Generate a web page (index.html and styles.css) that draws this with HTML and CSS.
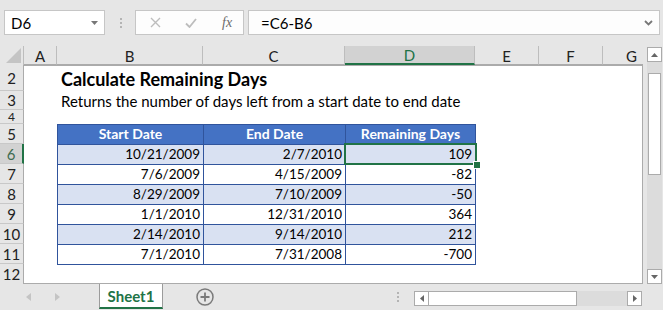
FILE: index.html
```
<!DOCTYPE html>
<html>
<head>
    <title>Calculate Remaining Days</title>
    <meta charset="UTF-8">
    <link rel="stylesheet" href="styles.css">
</head>
<body>
<div class="app">
    <div class="toolbar">
        <div class="namebox">
            <span>D6</span>
            <svg class="caret" width="7" height="4" viewBox="0 0 7 4"><path d="M0 0h7L3.5 4z" fill="#777"/></svg>
        </div>
        <div class="vdots"><i></i><i></i><i></i></div>
        <div class="fxbox">
            <svg class="ico" width="11" height="11" viewBox="0 0 11 11"><path d="M1 1l9 9M10 1l-9 9" stroke="#bdbdbd" stroke-width="1.4" fill="none"/></svg>
            <svg class="ico" width="12" height="10" viewBox="0 0 12 10"><path d="M1 5.5l3.5 3.5L11 1" stroke="#bdbdbd" stroke-width="1.8" fill="none"/></svg>
            <span class="fx">fx</span>
        </div>
        <div class="formula">
            <span>=C6-B6</span>
            <svg class="chev" width="9" height="6" viewBox="0 0 9 6"><path d="M1 1l3.5 3.5L8 1" stroke="#777" stroke-width="1.8" fill="none"/></svg>
        </div>
    </div>

    <div class="main">
        <div class="grid">
            <div class="canvas"></div>

            <div class="corner"><svg width="15" height="15" viewBox="0 0 15 15"><path d="M15 0V15H0z" fill="#c4c4c4"/></svg></div>
            <div class="colhead">A</div>
            <div class="colhead">B</div>
            <div class="colhead">C</div>
            <div class="colhead active">D</div>
            <div class="colhead">E</div>
            <div class="colhead">F</div>
            <div class="colhead last">G</div>

            <div class="rowhead r2">2</div>
            <div class="rowhead r3">3</div>
            <div class="rowhead r4">4</div>
            <div class="rowhead r5">5</div>
            <div class="rowhead r6 active">6</div>
            <div class="rowhead r7">7</div>
            <div class="rowhead r8">8</div>
            <div class="rowhead r9">9</div>
            <div class="rowhead r10">10</div>
            <div class="rowhead r11">11</div>
            <div class="rowhead r12">12</div>

            <div class="title">Calculate Remaining Days</div>
            <div class="subtitle">Returns the number of days left from a start date to end date</div>

            <div class="table">
                <div class="th">Start Date</div><div class="th">End Date</div><div class="th">Remaining Days</div>
                <div class="td band">10/21/2009</div><div class="td band">2/7/2010</div><div class="td band">109</div>
                <div class="td">7/6/2009</div><div class="td">4/15/2009</div><div class="td">-82</div>
                <div class="td band">8/29/2009</div><div class="td band">7/10/2009</div><div class="td band">-50</div>
                <div class="td">1/1/2010</div><div class="td">12/31/2010</div><div class="td">364</div>
                <div class="td band">2/14/2010</div><div class="td band">9/14/2010</div><div class="td band">212</div>
                <div class="td">7/1/2010</div><div class="td">7/31/2008</div><div class="td">-700</div>
            </div>

            <div class="selcell"><div class="sel"></div><div class="handle"></div></div>
        </div>

        <div class="vscroll">
            <div class="sbtn"><svg width="7" height="4" viewBox="0 0 7 4"><path d="M3.5 0L7 4H0z" fill="#666"/></svg></div>
            <div class="vtrack"><div class="vthumb"></div></div>
            <div class="sbtn"><svg width="7" height="4" viewBox="0 0 7 4"><path d="M0 0h7L3.5 4z" fill="#666"/></svg></div>
        </div>
    </div>

    <div class="tabs">
        <div class="tabnav">
            <svg width="5" height="8" viewBox="0 0 5 8"><path d="M5 0V8L0 4z" fill="#c4c4c4"/></svg>
            <svg width="5" height="8" viewBox="0 0 5 8"><path d="M0 0V8L5 4z" fill="#c4c4c4"/></svg>
        </div>
        <div class="tab">Sheet1</div>
        <div class="addsheet">
            <svg width="18" height="18" viewBox="0 0 18 18"><circle cx="9" cy="9" r="8" stroke="#7a7a7a" stroke-width="1.5" fill="none"/><path d="M9 4.5v9M4.5 9h9" stroke="#7a7a7a" stroke-width="1.8"/></svg>
        </div>
        <div class="vdots hd"><i></i><i></i><i></i></div>
        <div class="hscroll">
            <div class="hbtn"><svg width="4" height="7" viewBox="0 0 4 7"><path d="M4 0V7L0 3.5z" fill="#666"/></svg></div>
            <div class="hthumb"></div>
            <div class="htrack"></div>
            <div class="hbtn"><svg width="4" height="7" viewBox="0 0 4 7"><path d="M0 0V7L4 3.5z" fill="#666"/></svg></div>
        </div>
    </div>
</div>
</body>
</html>
```

FILE: styles.css
```
* { box-sizing: border-box; }

body {
    margin: 0;
    background: #e6e6e6;
    font-family: Lato, "Liberation Sans", sans-serif;
    font-size: 15px;
    color: #000;
}

.app {
    width: 663px;
    height: 310px;
    overflow: hidden;
}

/* formula bar */

.toolbar {
    height: 46px;
    display: flex;
    align-items: flex-start;
    padding: 10px 0 0 4px;
}

.namebox {
    width: 101px;
    height: 25px;
    background: #fff;
    border: 1px solid #c6c6c6;
    display: flex;
    align-items: center;
    justify-content: space-between;
    padding: 0 6px 0 6px;
}

.vdots {
    display: flex;
    flex-direction: column;
    gap: 2px;
    margin: 8px 0 0 15px;
}
.vdots i {
    display: block;
    width: 2px;
    height: 2px;
    background: #b4b4b4;
}

.fxbox {
    width: 109px;
    height: 25px;
    margin-left: 13px;
    background: #fdfdfd;
    border: 1px solid #c6c6c6;
    display: flex;
    align-items: center;
    padding-left: 14px;
    gap: 24px;
}
.fx {
    font-family: "Liberation Serif", serif;
    font-style: italic;
    font-size: 14px;
    color: #6b6b6b;
    margin-left: 1px;
}

.formula {
    flex: 1;
    height: 25px;
    margin: 0 3px 0 4px;
    background: #fdfdfd;
    border: 1px solid #c6c6c6;
    display: flex;
    align-items: center;
    justify-content: space-between;
    padding: 0 6px 0 12px;
}

/* sheet */

.main {
    height: 238px;
    display: flex;
}

.grid {
    width: 643px;
    display: grid;
    grid-template-columns: 24px 33px 146px 142px 130px 64px 64px 40px;
    grid-template-rows: 19px 26px 19px 14px repeat(7, 20px) 20px;
}

.canvas {
    grid-column: 2 / -1;
    grid-row: 2 / -1;
    background: #fff;
    border-top: 1px solid #ababab;
    border-right: 1px solid #ababab;
    border-bottom: 1px solid #ababab;
}

.corner {
    grid-column: 1;
    grid-row: 1;
    display: flex;
    align-items: flex-end;
    justify-content: flex-end;
    padding: 0 2px 2px 0;
    border-right: 1px solid #bdbdbd;
}

.colhead {
    grid-row: 1;
    display: flex;
    align-items: center;
    justify-content: center;
    border-right: 1px solid #bdbdbd;
    border-bottom: 1px solid #ababab;
    color: #222;
    font-size: 15px;
    padding-top: 1px;
}
.colhead.last { justify-content: flex-end; padding-right: 6px; border-right: none; }
.colhead.active {
    background: #d2d2d2;
    color: #217346;
    border-bottom: 2px solid #217346;
}

.rowhead {
    grid-column: 1;
    display: flex;
    align-items: center;
    justify-content: center;
    overflow: hidden;
    border-right: 1px solid #ababab;
    border-bottom: 1px solid #c8c8c8;
    color: #222;
    font-size: 15px;
}
.rowhead.active {
    background: #d2d2d2;
    color: #3d6b50;
    border-right: 2px solid #217346;
}
.r2 { grid-row: 2; }
.r3 { grid-row: 3; }
.r4 { grid-row: 4; font-size: 12px; line-height: 12px; overflow: visible; }
.r5 { grid-row: 5; }
.r6 { grid-row: 6; }
.r7 { grid-row: 7; }
.r8 { grid-row: 8; }
.r9 { grid-row: 9; }
.r10 { grid-row: 10; }
.r11 { grid-row: 11; }
.r12 { grid-row: 12; border-bottom: none; }

.title {
    grid-column: 3 / -1;
    grid-row: 2;
    align-self: end;
    padding: 0 0 1px 4px;
    font-size: 18px;
    font-weight: bold;
}

.subtitle {
    grid-column: 3 / -1;
    grid-row: 3;
    align-self: end;
    padding-left: 4px;
    white-space: nowrap;
    line-height: 18px;
}

/* data table */

.table {
    grid-column: 3 / 6;
    grid-row: 5 / 12;
    width: 419px;
    display: grid;
    grid-template-columns: 147px 142px 130px;
    grid-template-rows: 21px repeat(6, 20px);
    align-self: start;
}

.th, .td {
    border-right: 1px solid #30549c;
    border-bottom: 1px solid #30549c;
    line-height: 18px;
    white-space: nowrap;
    font-size: 13.5px;
}
.th:first-child, .td:nth-child(3n+1) { border-left: 1px solid #30549c; }

.th {
    background: #4472c4;
    color: #fff;
    font-weight: bold;
    font-size: 14px;
    text-align: center;
    border-top: 1px solid #30549c;
}

.td {
    text-align: right;
    padding-right: 3px;
    line-height: 19px;
}
.td.band { background: #d9e1f2; }

.selcell {
    grid-column: 5;
    grid-row: 6;
    position: relative;
}
.sel {
    position: absolute;
    left: -1px;
    top: -1px;
    right: -2px;
    bottom: -1px;
    border: 2px solid #217346;
}
.handle {
    position: absolute;
    right: -5px;
    bottom: -4px;
    width: 6px;
    height: 6px;
    background: #217346;
    outline: 1px solid #fff;
}

/* scrollbars */

.vscroll {
    width: 20px;
    padding: 1px 1px 0 4px;
    display: flex;
    flex-direction: column;
}
.sbtn {
    height: 15px;
    background: #fff;
    border: 1px solid #ababab;
    display: flex;
    align-items: center;
    justify-content: center;
}
.vtrack {
    flex: 1;
    background: #dcdcdc;
    padding: 11px 1px 0 1px;
}
.vthumb {
    height: 102px;
    background: #fff;
    border: 1px solid #ababab;
}

/* sheet tabs */

.tabs {
    height: 26px;
    display: flex;
    align-items: flex-start;
}

.tabnav {
    width: 99px;
    display: flex;
    gap: 24px;
    padding: 9px 0 0 26px;
}

.tab {
    width: 64px;
    height: 25px;
    background: #fff;
    border-left: 1px solid #9b9b9b;
    border-right: 1px solid #9b9b9b;
    border-bottom: 2px solid #217346;
    color: #217346;
    font-weight: bold;
    font-size: 15px;
    display: flex;
    align-items: center;
    justify-content: center;
}

.addsheet {
    margin: 4px 0 0 33px;
    display: flex;
}

.vdots.hd {
    margin: 8px 0 0 183px;
}

.hscroll {
    margin: 7px 0 0 15px;
    width: 228px;
    height: 15px;
    display: flex;
}
.hbtn {
    width: 15px;
    background: #fff;
    border: 1px solid #ababab;
    display: flex;
    align-items: center;
    justify-content: center;
}
.hthumb {
    width: 148px;
    background: #fff;
    border: 1px solid #ababab;
    border-left: none;
}
.htrack {
    flex: 1;
    background: #dcdcdc;
}
```
